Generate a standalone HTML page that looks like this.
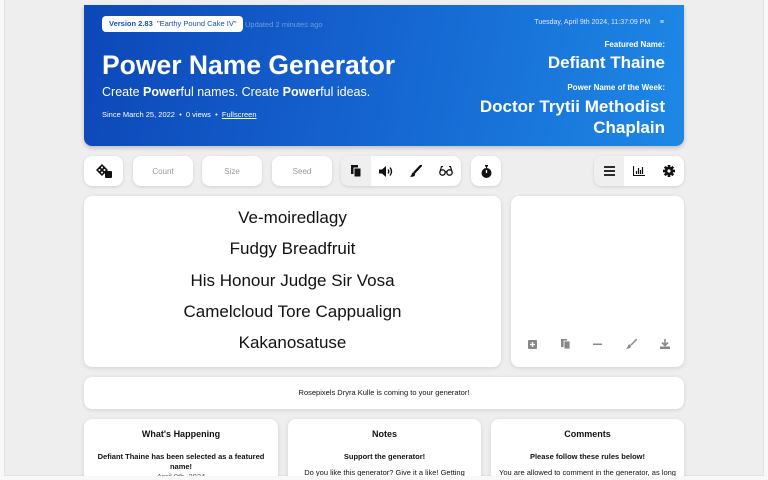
<!DOCTYPE html>
<html><head><meta charset="utf-8"><style>
*{box-sizing:border-box;margin:0;padding:0}
html,body{width:768px;height:480px;overflow:hidden}
body{background:#f8f8f8;font-family:"Liberation Sans",sans-serif;position:relative}
.frame{position:absolute;left:4px;top:0;width:760px;height:476px;background:#eeeeee;box-shadow:inset 1px 0 0 #e2e2e2,inset -1px 0 0 #e2e2e2,inset 0 -1px 0 #e2e2e2;overflow:hidden}
.abs{position:absolute}
.hdr{left:80px;top:5px;width:600px;height:141px;border-radius:0 0 8px 8px;background:linear-gradient(100deg,#0d47b8 0%,#1565d0 50%,#1e88e5 100%);color:#fff;box-shadow:0 2px 4px rgba(0,0,0,.2)}
.card{background:#fff;border-radius:8px;box-shadow:0 1px 4px rgba(0,0,0,.12)}
.btn{background:#fff;border-radius:8px;box-shadow:0 1px 3px rgba(0,0,0,.12);height:30px;top:156px;display:flex;align-items:center;justify-content:center;font-size:8px;color:#999}
.ic{width:30px;height:30px;display:flex;align-items:center;justify-content:center}
.names div{text-align:center;font-size:17px;color:#111;height:31.3px;line-height:31px}
.bc{top:419px;height:70px;text-align:center;font-size:7.5px;color:#111}
.bc h4{font-size:9px;margin-top:10px;margin-bottom:13px}
svg{display:block}
</style></head><body>
<div class="frame">
<div class="abs hdr">
 <div class="abs" style="left:18px;top:11px;background:#fff;border-radius:4px;height:16px;padding:0 7px;font-size:7.5px;line-height:16px;color:#1450b8"><b>Version 2.83</b>&nbsp; "Earthy Pound Cake IV"</div>
 <div class="abs" style="left:161px;top:15px;font-size:7.5px;color:#6e9be0">Updated 2 minutes ago</div>
 <div class="abs" style="left:18px;top:45px;font-size:26.5px;font-weight:bold">Power Name Generator</div>
 <div class="abs" style="left:18px;top:80px;font-size:12.5px">Create <b>Power</b>ful names. Create <b>Power</b>ful ideas.</div>
 <div class="abs" style="left:18px;top:105px;font-size:7.5px">Since March 25, 2022 &nbsp;•&nbsp; 0 views &nbsp;•&nbsp; <u>Fullscreen</u></div>
 <div class="abs" style="right:20px;top:14px;font-size:7px;color:#dde8fb">Tuesday, April 9th 2024, 11:37:09 PM &nbsp;&nbsp;&nbsp; <b style="color:#fff">≡</b></div>
 <div class="abs" style="right:19px;top:35px;font-size:8px;font-weight:bold;text-align:right">Featured Name:</div>
 <div class="abs" style="right:19px;top:48px;font-size:17px;font-weight:bold;text-align:right">Defiant Thaine</div>
 <div class="abs" style="right:19px;top:78px;font-size:8px;font-weight:bold;text-align:right">Power Name of the Week:</div>
 <div class="abs" style="right:19px;top:91px;font-size:17px;font-weight:bold;text-align:right;line-height:21px">Doctor Trytii Methodist<br>Chaplain</div>
</div>
<div class="abs btn" style="left:80px;width:39px"><svg width="16" height="14" viewBox="0 0 16 14"><path d="M6 0L12 6L6 12L0 6Z" fill="#111"/><circle cx="6" cy="3.5" r="1" fill="#fff"/><circle cx="3.5" cy="6" r="1" fill="#fff"/><circle cx="8.5" cy="6" r="1" fill="#fff"/><circle cx="6" cy="8.5" r="1" fill="#fff"/><rect x="9" y="7" width="7" height="7" rx="1" fill="#111"/></svg></div>
<div class="abs btn" style="left:129px;width:60px">Count</div>
<div class="abs btn" style="left:198px;width:60px">Size</div>
<div class="abs btn" style="left:268px;width:60px">Seed</div>
<div class="abs btn" style="left:337px;width:120px;justify-content:flex-start">
 <div class="ic" style="background:#efefef;border-radius:8px 0 0 8px"><svg width="10" height="12" viewBox="0 0 10 12"><rect x="0" y="0" width="7" height="9" fill="#111"/><rect x="3" y="3" width="7" height="9" fill="#111" stroke="#efefef"/></svg></div>
 <div class="ic"><svg width="14" height="11" viewBox="0 0 14 11"><path d="M0 3.5H3L7 0V11L3 7.5H0Z" fill="#111"/><path d="M9 3.5Q10.5 5.5 9 7.5M11 1.5Q14 5.5 11 9.5" stroke="#111" stroke-width="1.4" fill="none"/></svg></div>
 <div class="ic"><svg width="12" height="12" viewBox="0 0 12 12"><path d="M11.5 0.5L5 7.5L4.5 7L11 0Z" stroke="#111" stroke-width="1.6"/><path d="M4 7.5Q6 9 4.5 11Q2 12.5 0 11.5Q1.5 10.5 1.8 9Q2.3 7 4 7.5Z" fill="#111"/></svg></div>
 <div class="ic"><svg width="14" height="10" viewBox="0 0 14 10"><circle cx="3.5" cy="6.5" r="2.7" stroke="#111" stroke-width="1.3" fill="none"/><circle cx="10.5" cy="6.5" r="2.7" stroke="#111" stroke-width="1.3" fill="none"/><path d="M6 6Q7 5 8 6M1 6L2.5 0.5H4M13 6L11.5 0.5H10" stroke="#111" stroke-width="1.2" fill="none"/></svg></div>
</div>
<div class="abs btn" style="left:467px;width:30px"><svg width="11" height="13" viewBox="0 0 11 13"><rect x="4" y="0" width="3" height="1.6" fill="#111"/><rect x="5" y="1" width="1" height="2" fill="#111"/><circle cx="5.5" cy="8" r="5" fill="#111"/><path d="M5.5 5V8" stroke="#fff" stroke-width="1.3"/></svg></div>
<div class="abs btn" style="left:590px;width:90px;justify-content:flex-start">
 <div class="ic" style="background:#efefef;border-radius:8px 0 0 8px"><svg width="11" height="10" viewBox="0 0 11 10"><path d="M0 1H11M0 5H11M0 9H11" stroke="#111" stroke-width="1.8"/></svg></div>
 <div class="ic"><svg width="12" height="10" viewBox="0 0 12 10"><path d="M0.5 0V9.5H12" stroke="#111" stroke-width="1.1" fill="none"/><path d="M3.5 8V5M5.5 8V2M7.5 8V4M9.5 8V1" stroke="#111" stroke-width="1.2"/></svg></div>
 <div class="ic"><svg width="12" height="12" viewBox="-6 -6 12 12"><g fill="#111"><circle r="4.2"/><rect x="-1.3" y="-6" width="2.6" height="12"/><rect x="-1.3" y="-6" width="2.6" height="12" transform="rotate(45)"/><rect x="-1.3" y="-6" width="2.6" height="12" transform="rotate(90)"/><rect x="-1.3" y="-6" width="2.6" height="12" transform="rotate(135)"/></g><circle r="1.6" fill="#fff"/></svg></div>
</div>
<div class="abs card names" style="left:80px;top:196px;width:417px;height:171px;padding-top:6px">
 <div>Ve-moiredlagy</div><div>Fudgy Breadfruit</div><div>His Honour Judge Sir Vosa</div><div>Camelcloud Tore Cappualign</div><div>Kakanosatuse</div>
</div>
<div class="abs card" style="left:507px;top:196px;width:173px;height:171px">
 <div class="abs" style="left:17px;top:143px;width:142px;display:flex;justify-content:space-between;align-items:center">
  <svg width="9" height="9"><rect width="9" height="9" rx="1" fill="#888"/><path d="M4.5 2V7M2 4.5H7" stroke="#fff" stroke-width="1.3"/></svg>
  <svg width="9" height="10"><rect width="6" height="8" fill="#888"/><rect x="3" y="2" width="6" height="8" fill="#888" stroke="#fff" stroke-width=".8"/></svg>
  <svg width="9" height="3"><rect y="0.5" width="9" height="1.5" fill="#888"/></svg>
  <svg width="11" height="10"><path d="M11 0L5 6" stroke="#888" stroke-width="1.5"/><path d="M4 5.5Q6 7 4 9Q2 10 0 9.5Q1.5 8.5 1.8 7.5Q2.5 5 4 5.5Z" fill="#888"/></svg>
  <svg width="10" height="10"><path d="M5 0V6M2 3.5L5 6.5L8 3.5" stroke="#888" stroke-width="1.6" fill="none"/><rect y="7.5" width="10" height="2.5" fill="#888"/></svg>
 </div>
</div>
<div class="abs card" style="left:80px;top:377px;width:600px;height:32px;text-align:center;font-size:7.5px;line-height:32px;color:#111">Rosepixels Dryra Kulle is coming to your generator!</div>
<div class="abs card bc" style="left:80px;width:194px"><h4>What's Happening</h4><div style="font-weight:bold;padding:0 12px;line-height:10px">Defiant Thaine has been selected as a featured name!</div><div style="color:#555">April 9th, 2024</div></div>
<div class="abs card bc" style="left:284px;width:193px"><h4>Notes</h4><div style="font-weight:bold">Support the generator!</div><div style="margin-top:7px">Do you like this generator? Give it a like! Getting</div></div>
<div class="abs card bc" style="left:487px;width:193px"><h4>Comments</h4><div style="font-weight:bold">Please follow these rules below!</div><div style="margin-top:7px">You are allowed to comment in the generator, as long</div></div>
</div>
</body></html>
